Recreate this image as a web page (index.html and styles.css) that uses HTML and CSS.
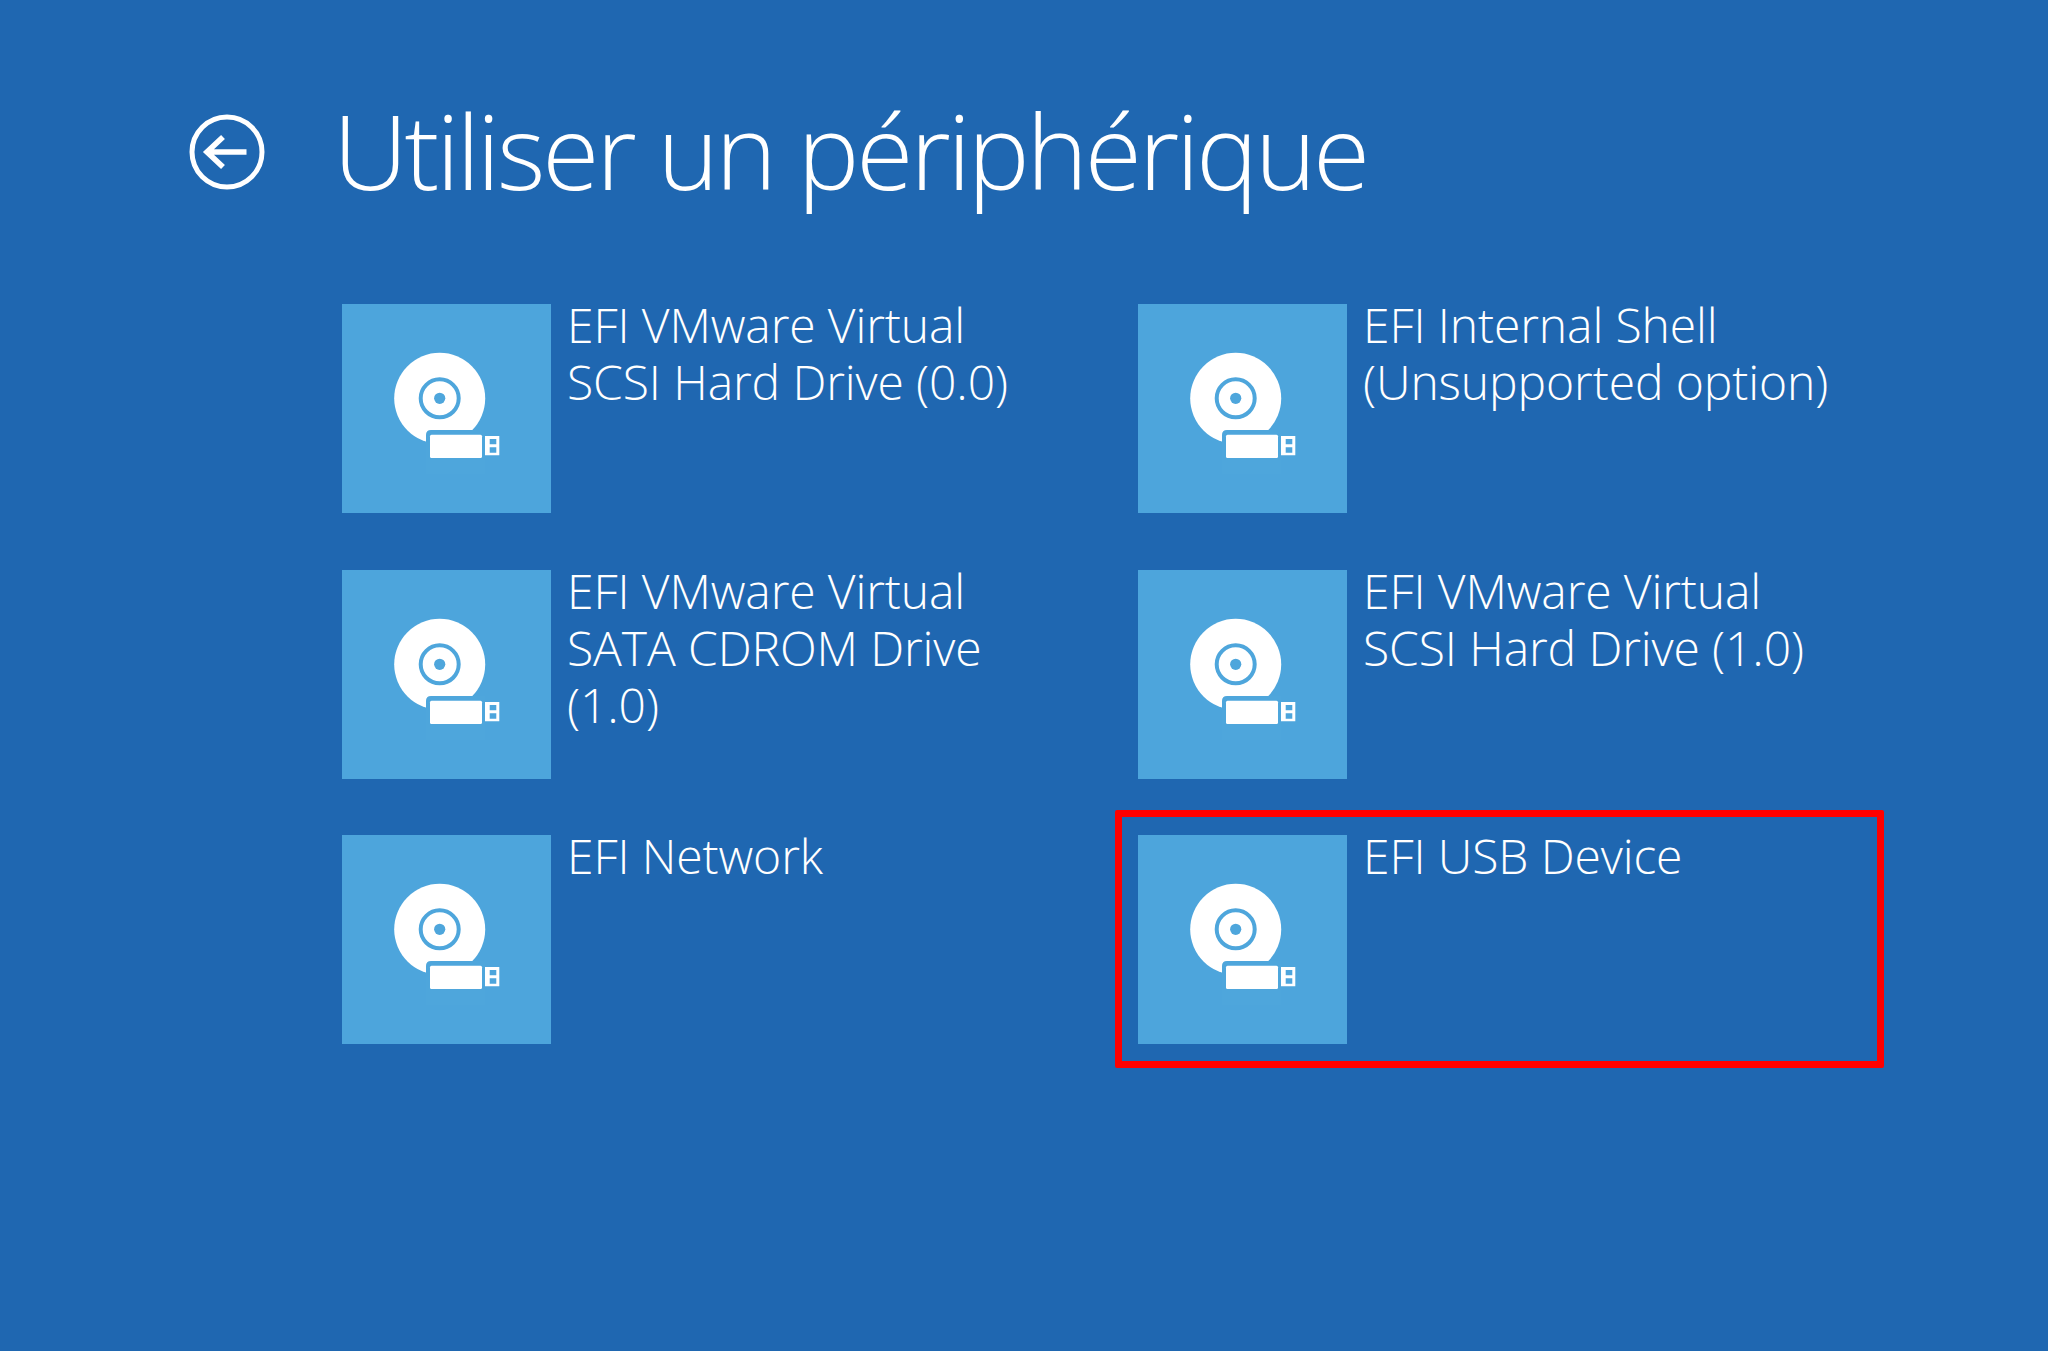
FILE: index.html
```html
<!DOCTYPE html>
<html lang="fr">
<head>
<meta charset="utf-8">
<title>Utiliser un périphérique</title>
<link rel="stylesheet" href="styles.css">
</head>
<body>
<svg class="defs" width="0" height="0" aria-hidden="true">
  <symbol id="drive" viewBox="0 0 209 209">
    <circle cx="97.7" cy="94.3" r="45.5" fill="#fff"/>
    <circle cx="97.7" cy="94.3" r="19" fill="none" stroke="#4ea6dc" stroke-width="4"/>
    <circle cx="97.7" cy="94.3" r="5.6" fill="#4ea6dc"/>
    <path d="M84 140 V131 Q84 126 89 126 H143 V170 H84 Z" fill="#4ea6dc"/>
    <rect x="88" y="130.7" width="52" height="23.3" rx="1.5" fill="#fff"/>
    <path fill-rule="evenodd" fill="#fff" d="M143 132 H157.3 V151.3 H143 Z M147.7 135 V140.3 H154.3 V135 Z M147.7 143.3 V148.7 H154.3 V143.3 Z"/>
  </symbol>
</svg>
<main class="page">
  <header class="head">
    <svg class="back" viewBox="0 0 80 80" aria-hidden="true">
      <circle cx="40" cy="40" r="35" fill="none" stroke="#fff" stroke-width="5"/>
      <path d="M20 40 H59.500 M36 25 L20 40 L36 55" fill="none" stroke="#fff" stroke-width="5.6"/>
    </svg>
    <h1 class="title">Utiliser un périphérique</h1>
  </header>
  <section class="grid">
    <div class="item">
      <div class="tile"><svg class="icon"><use href="#drive"/></svg></div>
      <p class="label">EFI VMware Virtual<br>SCSI Hard Drive (0.0)</p>
    </div>
    <div class="item">
      <div class="tile"><svg class="icon"><use href="#drive"/></svg></div>
      <p class="label">EFI Internal Shell<br>(Unsupported option)</p>
    </div>
    <div class="item">
      <div class="tile"><svg class="icon"><use href="#drive"/></svg></div>
      <p class="label">EFI VMware Virtual<br>SATA CDROM Drive<br>(1.0)</p>
    </div>
    <div class="item">
      <div class="tile"><svg class="icon"><use href="#drive"/></svg></div>
      <p class="label">EFI VMware Virtual<br>SCSI Hard Drive (1.0)</p>
    </div>
    <div class="item">
      <div class="tile"><svg class="icon"><use href="#drive"/></svg></div>
      <p class="label">EFI Network</p>
    </div>
    <div class="item marked">
      <div class="tile"><svg class="icon"><use href="#drive"/></svg></div>
      <p class="label">EFI USB Device</p>
    </div>
  </section>
</main>
</body>
</html>
```
FILE: styles.css
```css
*, *::after { box-sizing: border-box; }
html, body { margin: 0; height: 100%; }
body {
  background: #1f67b1;
  color: #fff;
  font-family: "Open Sans", "Noto Sans", "Liberation Sans", sans-serif;
  font-weight: 300;
  overflow: hidden;
}
.defs { position: absolute; }
.page { height: 1351px; padding: 92px 0 0 187px; }
.head { display: flex; align-items: center; height: 120px; gap: 66px; }
.back { width: 80px; height: 80px; flex: none; }
.title { margin: -4px 0 0; font-size: 104px; line-height: 120px; font-weight: 300; letter-spacing: -3.2px; white-space: nowrap; }
.grid {
  display: grid;
  grid-template-columns: 796px 796px;
  grid-auto-rows: 209.5px;
  row-gap: 56px;
  margin: 92px 0 0 155px;
}
.item { display: flex; gap: 16px; position: relative; }
.tile { width: 209px; height: 209px; flex: none; background: #4da5dc; }
.icon { display: block; width: 209px; height: 209px; }
.label { margin: -8px 0 0; font-size: 48px; line-height: 57px; letter-spacing: -0.1px; white-space: nowrap; }
.marked::after {
  content: "";
  position: absolute;
  left: -23px;
  top: -25px;
  width: 769px;
  height: 258px;
  border: 7px solid #f00;
  border-radius: 2px;
}
```
